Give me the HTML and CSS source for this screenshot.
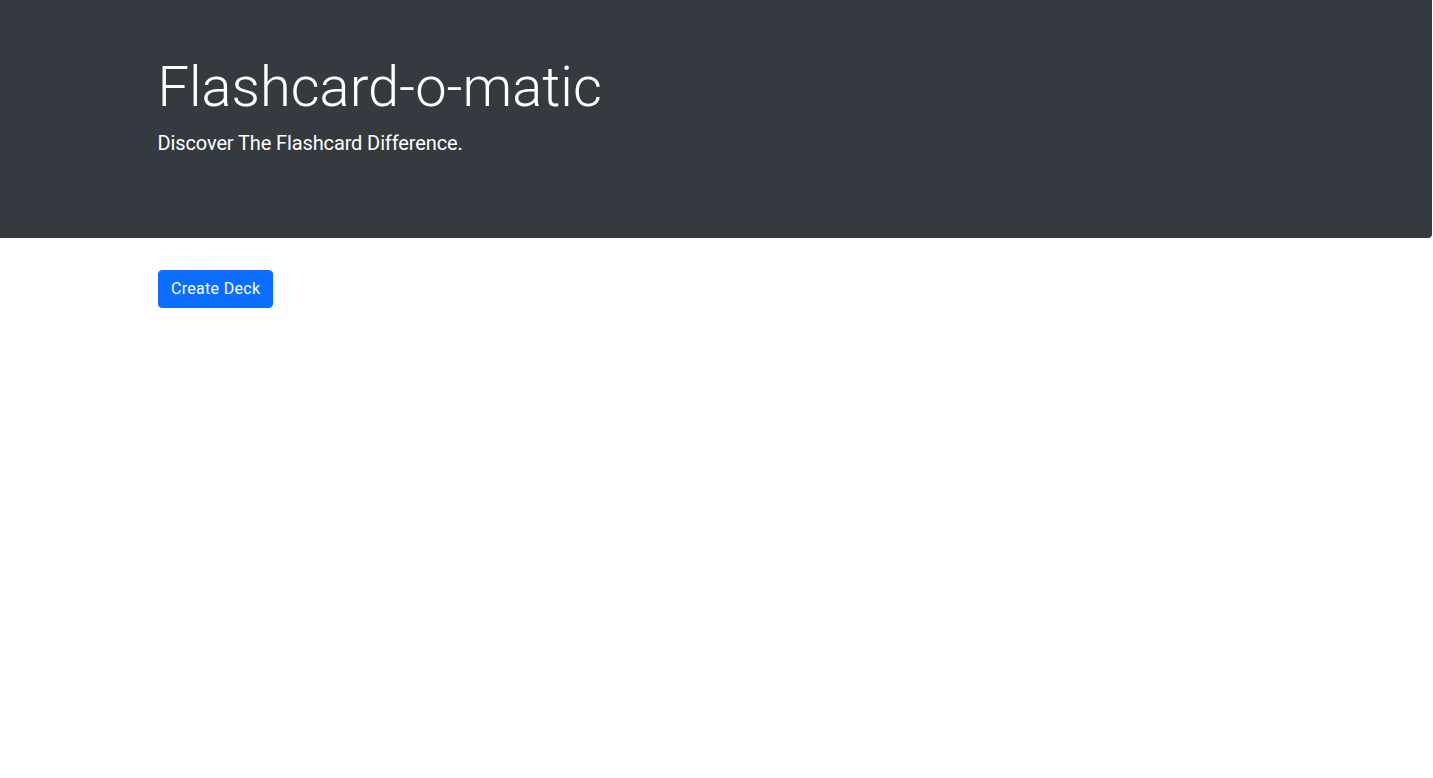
FILE: index.html
```html
<!DOCTYPE html>
<html lang="en">
<head>
<meta charset="utf-8">
<title>Flashcard-o-matic</title>
<link rel="stylesheet" href="styles.css">
</head>
<body>
<header class="hero">
  <div class="container">
    <h1 class="hero-title">Flashcard-o-matic</h1>
    <p class="hero-lead">Discover The Flashcard Difference.</p>
  </div>
</header>
<main class="container">
  <button class="btn-primary" type="button">Create Deck</button>
</main>
</body>
</html>
```

FILE: styles.css
```css
* { box-sizing: border-box; }
html, body { margin: 0; padding: 0; }
body {
  font-family: Roboto, "Noto Sans", "Liberation Sans", sans-serif;
  font-size: 16px;
  line-height: 1.5;
  color: #212529;
  background: #fff;
}
.container {
  max-width: 1141px;
  margin: 0 auto;
  padding: 0 12px;
}
.hero {
  background: #343a40;
  color: #fff;
  height: 238px;
  margin-right: 1px;
  padding-top: 54px;
  border-radius: 0 0 4px 0;
  margin-bottom: 32px;
}
.hero-title {
  margin: 0 0 7px;
  font-size: 56px;
  font-weight: 300;
  line-height: 1.2;
}
.hero-lead {
  margin: 0;
  font-size: 20px;
  font-weight: 400;
  line-height: 1.5;
  letter-spacing: -0.12px;
}
.btn-primary {
  display: inline-block;
  font-family: inherit;
  font-size: 16px;
  line-height: 1.5;
  letter-spacing: 0.3px;
  padding: 6px 12px;
  color: #fff;
  background: #0d6efd;
  border: 1px solid #0d6efd;
  border-radius: 4px;
  cursor: pointer;
}
```
